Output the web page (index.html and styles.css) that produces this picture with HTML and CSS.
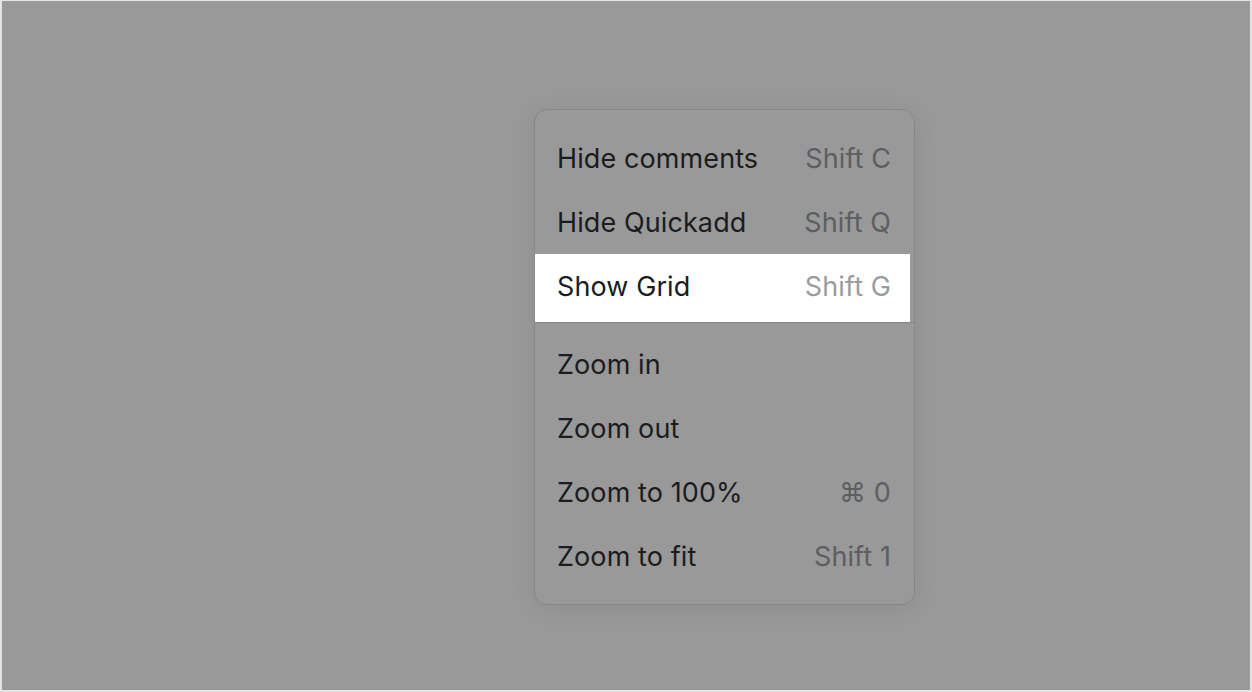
FILE: index.html
```html
<!DOCTYPE html>
<html>
<head>
<meta charset="utf-8">
<link rel="stylesheet" href="styles.css">
</head>
<body>
<div class="screen">
  <div class="menu">
    <div class="row"><span class="label">Hide comments</span><span class="key">Shift C</span></div>
    <div class="row"><span class="label">Hide Quickadd</span><span class="key">Shift Q</span></div>
    <div class="row active"><span class="label">Show Grid</span><span class="key">Shift G</span></div>
    <div class="sep"></div>
    <div class="row"><span class="label">Zoom in</span><span class="key"></span></div>
    <div class="row"><span class="label">Zoom out</span><span class="key"></span></div>
    <div class="row"><span class="label">Zoom to 100%</span><span class="key">⌘ 0</span></div>
    <div class="row"><span class="label">Zoom to fit</span><span class="key">Shift 1</span></div>
  </div>
</div>
</body>
</html>
```

FILE: styles.css
```css
html, body {
  margin: 0;
  padding: 0;
  background: #e4e4e4;
}
.screen {
  box-sizing: border-box;
  width: 1252px;
  height: 692px;
  background: #999999;
  border: 2px solid #e4e4e4;
  border-top-width: 1px;
  padding: 108px 0 0 532px;
  display: flex;
  align-items: flex-start;
  font-family: Inter, "Open Sans", sans-serif;
}
.menu {
  box-sizing: border-box;
  width: 381px;
  padding: 16px 4px 16px 0;
  border: 1px solid #878787;
  border-radius: 13px;
  background: #999999;
  box-shadow: 0 4px 24px rgba(0, 0, 0, 0.08);
  display: flex;
  flex-direction: column;
}
.row {
  height: 64px;
  display: flex;
  align-items: center;
  justify-content: space-between;
  padding: 0 19px 0 22px;
  font-size: 27px;
  letter-spacing: 0.1px;
}
.label {
  color: #1b1c1e;
}
.key {
  color: #5c5e62;
}
.row.active {
  height: 64px;
  padding-bottom: 4px;
  background: #ffffff;
}
.row.active .key {
  color: #9a9ca1;
}
.sep {
  height: 1px;
  background: #868686;
  margin: 0 -4px 9px 0;
}
```
